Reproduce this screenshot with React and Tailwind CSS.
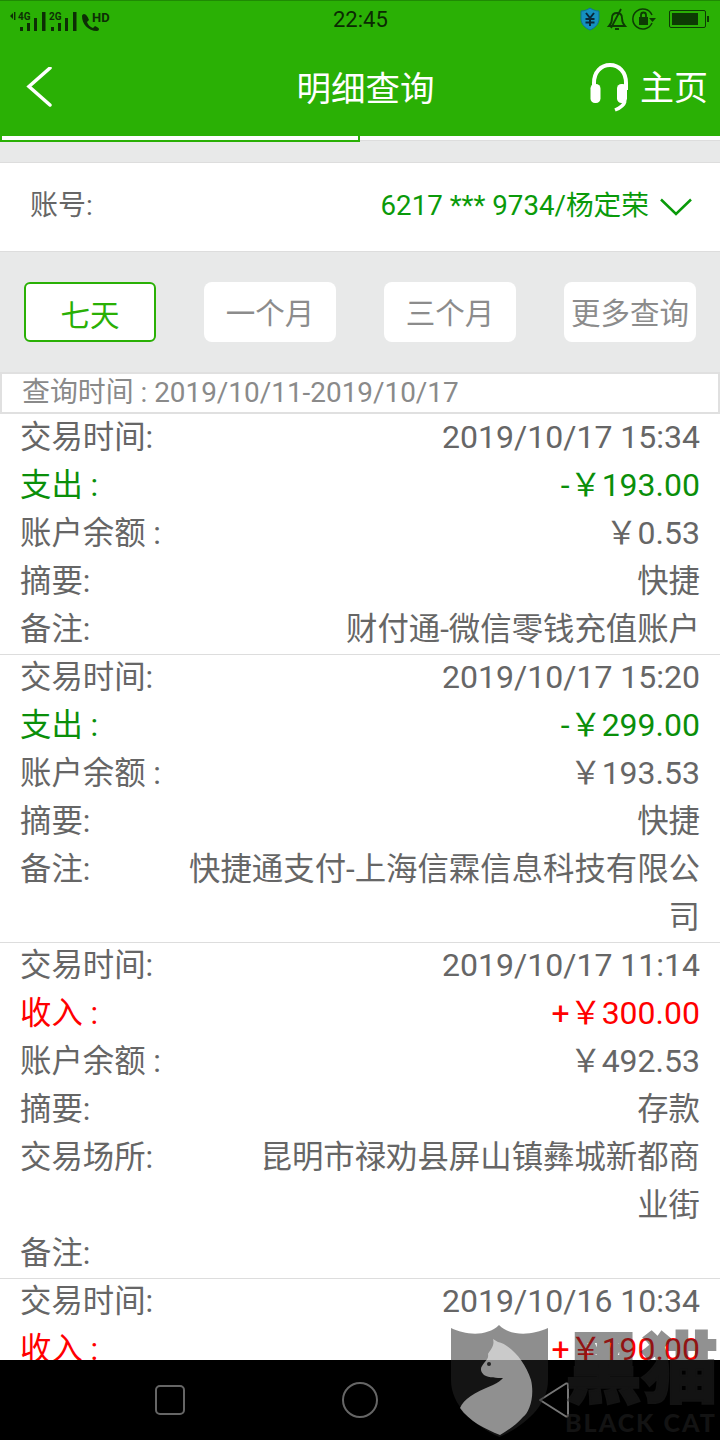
function StatusBar() {
  return (
    <div className="relative flex h-[38px] items-center justify-between border-t border-[#1f8a04] pl-[9px] pr-[11px]">
      <svg width="104" height="30" viewBox="0 0 104 30" className="-mt-[2px]">
        <g fill="#0d2f05">
          <path d="M1 12l3-3v6zM5 8h1.400v8H5z" />
          <rect x="11" y="23" width="3" height="4" />
          <rect x="18" y="19" width="3" height="8" />
          <rect x="25" y="14" width="3" height="13" />
          <rect x="33" y="8" width="3.500" height="19" />
          <rect x="42" y="23" width="3" height="4" />
          <rect x="49" y="19" width="3" height="8" />
          <rect x="56" y="14" width="3" height="13" />
          <rect x="64" y="8" width="3.500" height="19" />
          <path d="M75 10c-1 0-2 1-2 2 0 8 6 15 15 15 1 0 2-1 2-2 0-1-2-2-4-3l-2 2c-3-1-5-3-6-6l2-2c-1-3-3-6-5-6z" />
        </g>
        <text x="9" y="16" fontSize="10" fontWeight="700" fill="#0d2f05" fontFamily="Roboto, sans-serif">4G</text>
        <text x="40" y="16" fontSize="10" fontWeight="700" fill="#0d2f05" fontFamily="Roboto, sans-serif">2G</text>
        <text x="83" y="18" fontSize="13" fontWeight="700" fill="#0d2f05" fontFamily="Roboto, sans-serif">HD</text>
      </svg>
      <span className="absolute left-[333px] top-[6px] text-[22px] leading-[26px] text-[#0b2a03]">22:45</span>
      <div className="-mt-[1px] flex items-center">
        <svg width="22" height="24" viewBox="0 0 22 24">
          <path d="M11 1c3 2 6 3 9 3v8c0 5-4 9-9 11C6 21 2 17 2 12V4c3 0 6-1 9-3z" fill="#1590c0" stroke="#116f93" />
          <path d="M7 6l4 5 4-5M6.500 12h9M6.500 15.500h9M11 11v8" fill="none" stroke="#08283a" strokeWidth="2" />
        </svg>
        <svg width="22" height="24" viewBox="0 0 22 24" className="ml-[5px]" fill="none" stroke="#0d3b04" strokeWidth="1.800">
          <path d="M3 19c2-2 3-4 3-8 0-3 2-5 5-5s5 2 5 5c0 4 1 6 3 8z" />
          <path d="M9 22h4M5 21L15 2" />
        </svg>
        <svg width="26" height="24" viewBox="0 0 26 24" className="ml-[4px]" fill="none" stroke="#0d3b04" strokeWidth="1.500">
          <path d="M20 8a10 10 0 1 0 0 8" />
          <rect x="7" y="10" width="9" height="8" fill="#0d3b04" stroke="none" />
          <path d="M9 10V8a2.500 2.500 0 0 1 5 0v2" strokeWidth="1.800" />
          <path d="M17 11h7l-3.500 4z" fill="#0d3b04" stroke="none" />
        </svg>
        <div className="ml-[11px] flex items-center">
          <div className="flex h-[18px] w-[37px] rounded-[2px] border border-[#0d3b04] p-[2px]">
            <div className="h-full w-[26px] bg-[#0d3b04]" />
          </div>
          <div className="ml-[1px] h-[6px] w-[2px] bg-[#0d3b04]" />
        </div>
      </div>
    </div>
  );
}

function Header() {
  return (
    <div className="h-[136px] bg-[#2ab005] text-white">
      <StatusBar />
      <div className="flex h-[98px] items-center pt-[2px]">
        <div className="flex w-[296px] pl-[26px]">
          <svg width="28" height="42" viewBox="0 0 28 42" fill="none" stroke="white" strokeWidth="3.500" strokeLinecap="round">
            <path d="M24 1L3 19.500L24 38" />
          </svg>
        </div>
        <span className="mt-[1px] w-[139px] text-center text-[34.500px] leading-[48px]">明细查询</span>
        <svg width="42" height="50" viewBox="0 0 42 50" className="-mt-[2px] ml-[155px]" fill="none" stroke="white" strokeWidth="4">
          <path d="M4 28V21C4 10 11 3 20 3s16 7 16 18v7" />
          <rect x="0.500" y="22" width="10" height="19" rx="4.500" fill="white" stroke="none" />
          <rect x="27" y="22" width="10" height="19" rx="4.500" fill="white" stroke="none" />
          <path d="M35 39c-1 4-5 7-10 9" strokeWidth="3.500" />
        </svg>
        <span className="ml-[8px] text-[34px] leading-[48px]">主页</span>
      </div>
    </div>
  );
}

function RangeButton({ label, active }) {
  if (active) {
    return (
      <div className="flex h-[60px] w-[132px] items-center justify-center rounded-[6px] border-2 border-[#2ab005] bg-white pt-[8px] text-[29.500px] leading-[40px] text-[#2ab005]">
        {label}
      </div>
    );
  }
  return (
    <div className="flex h-[60px] w-[132px] items-center justify-center rounded-[8px] bg-white pt-[4px] text-[29.500px] leading-[40px] text-[#8c8c8c]">
      {label}
    </div>
  );
}

const records = [
  {
    time: '2019/10/17 15:34',
    kind: '支出 :',
    amount: '-￥193.00',
    out: true,
    balance: '￥0.53',
    rows: [['摘要:', '快捷'], ['备注:', '财付通-微信零钱充值账户']],
  },
  {
    time: '2019/10/17 15:20',
    kind: '支出 :',
    amount: '-￥299.00',
    out: true,
    balance: '￥193.53',
    rows: [['摘要:', '快捷'], ['备注:', '快捷通支付-上海信霖信息科技有限公\n司']],
  },
  {
    time: '2019/10/17 11:14',
    kind: '收入 :',
    amount: '+￥300.00',
    out: false,
    balance: '￥492.53',
    rows: [['摘要:', '存款'], ['交易场所:', '昆明市禄劝县屏山镇彝城新都商\n业街'], ['备注:', '']],
  },
  {
    time: '2019/10/16 10:34',
    kind: '收入 :',
    amount: '+￥190.00',
    out: false,
    balance: '￥302.53',
    rows: [],
  },
];

function Row({ label, value, color = 'text-[#666666]', numeric }) {
  return (
    <div className={`flex justify-between text-[31.400px] leading-[48px] ${color}`}>
      <span className="whitespace-nowrap">{label}</span>
      <span className={numeric ? 'whitespace-nowrap text-right text-[32px] leading-[46px]' : 'whitespace-pre-line text-right'}>{value}</span>
    </div>
  );
}

function Record({ item }) {
  const tone = item.out ? 'text-[#0a8f0a]' : 'text-[#ff0000]';
  return (
    <div className="-mb-[1px] border-b border-[#dddddd] pl-[20px] pr-[20px]">
      <Row label="交易时间:" value={item.time} numeric />
      <Row label={item.kind} value={item.amount} color={tone} numeric />
      <Row label="账户余额 :" value={item.balance} numeric />
      {item.rows.map(([label, value]) => (
        <Row key={label} label={label} value={value} />
      ))}
    </div>
  );
}

function Watermark() {
  return (
    <div className="pointer-events-none absolute left-[451px] top-[1325px] flex h-[112px] w-[269px] overflow-hidden">
      <svg width="97" height="112" viewBox="0 0 97 112" className="shrink-0">
        <path
          d="M0 3C14 10 36 12 48 0C60 12 82 10 97 3V55C97 80 75 100 48.500 112C22 100 0 80 0 55Z"
          fill="#262626"
          fillOpacity="0.52"
        />
        <path
          d="M42 14L47 17C58 19 74 35 80 55C84 72 78 88 72 92C65 100 56 106 49 110C34 104 18 96 9 83C13 74 22 68 42 60C47 58 50 55 52 53C46 53 38 53 33 50C30 47 29 44 31 41C34 36 38 34 37 29C39 25 44 21 42 14Z"
          fill="#ffffff"
          fillOpacity="0.53"
        />
        <circle cx="38" cy="39" r="2" fill="#222222" />
      </svg>
      <div className="ml-[17px] flex shrink-0 flex-col text-[#262626] opacity-50">
        <span className="mt-[6px] whitespace-nowrap text-[77px] font-black leading-[80px] tracking-[-1px] [-webkit-text-stroke:2px_#262626]">黑猫</span>
        <span className="-mt-[1px] whitespace-nowrap font-[Lato,sans-serif] text-[25px] font-black leading-[24px] tracking-[2px]">BLACK CAT</span>
      </div>
    </div>
  );
}

export default function App() {
  return (
    <div className="relative flex h-[1440px] w-[720px] flex-col overflow-hidden bg-[#e8e9e9] font-[Roboto,'Noto_Sans_CJK_SC',sans-serif]">
      <Header />
      <div className="flex h-[6px]">
        <div className="w-[360px] border-x-2 border-b-2 border-[#2ab005] bg-white" />
        <div className="h-[5px] flex-1 border-b border-[#dddddd] bg-white" />
      </div>
      <div className="h-[20px] shrink-0" />

      <div className="flex h-[90px] shrink-0 items-center justify-between border-y border-[#dddddd] bg-white pb-[2px] pl-[30px] pr-[28px]">
        <span className="text-[28px] text-[#666666]">账号:</span>
        <div className="flex items-center">
          <span className="text-[27.700px] text-[#0a9a0a]">6217 *** 9734/杨定荣</span>
          <svg width="32" height="18" viewBox="0 0 32 18" className="ml-[11px] mt-[2px]" fill="none" stroke="#0a9a0a" strokeWidth="2.500">
            <path d="M1 1.500L16 16L31 1.500" />
          </svg>
        </div>
      </div>

      <div className="flex h-[120px] shrink-0 items-start justify-between px-[24px] pt-[30px]">
        <RangeButton label="七天" active />
        <RangeButton label="一个月" />
        <RangeButton label="三个月" />
        <RangeButton label="更多查询" />
      </div>

      <div className="h-[42px] shrink-0 border-2 border-[#e0e0e0] bg-white pl-[20px] text-[27.900px] leading-[38px] text-[#8a8a8a]">
        查询时间 : 2019/10/11-2019/10/17
      </div>

      <div className="min-h-0 flex-1 overflow-hidden bg-white">
        {records.map((item) => (
          <Record key={item.time} item={item} />
        ))}
      </div>

      <div className="relative flex h-[80px] shrink-0 items-center bg-black pl-[155px]">
        <div className="h-[30px] w-[30px] rounded-[5px] border-2 border-[#666666]" />
        <div className="ml-[157px] h-[36px] w-[36px] rounded-full border-2 border-[#666666]" />
        <svg width="32" height="36" viewBox="0 0 32 36" className="ml-[160px]" fill="none" stroke="#777777" strokeWidth="2" strokeLinejoin="round">
          <path d="M2 18L28 1.500Q30 1 30 3V33Q30 35 28 34.500Z" />
        </svg>
      </div>

      <Watermark />
    </div>
  );
}
